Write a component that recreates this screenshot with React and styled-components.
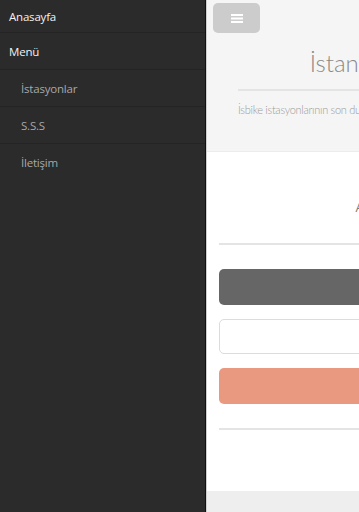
import React from 'react'
import styled, { createGlobalStyle } from 'styled-components'

const Global = createGlobalStyle`
  html, body { margin:0; padding:0; }
  body {
    width:359px;
    height:512px;
    overflow:hidden;
    font-family:"Open Sans", "Liberation Sans", sans-serif;
    background:#2b2b2b;
  }
`
const Page = styled.div`
  display:flex;
  height:512px;
  width:359px;
  overflow:hidden;
`
const Sidebar = styled.nav`
  width:205px;
  flex-shrink:0;
  background:#2b2b2b;
  border-right:1px solid #111;
  display:flex;
  flex-direction:column;
`
const Item = styled.div`
  height:${p => (p.first ? '32px' : '36px')};
  display:flex;
  align-items:center;
  padding-left:${p => (p.sub ? '21px' : '9px')};
  border-bottom:${p => (p.last ? 'none' : '1px solid #242424')};
  color:${p => (p.sub ? '#a8a8a8' : '#f2f2f2')};
  font-size:11.5px;
  letter-spacing:-0.2px;
`
const Main = styled.main`
  width:359px;
  flex-shrink:0;
  border-left:1px solid #cfcfcf;
  display:flex;
  flex-direction:column;
  background:#fff;
`
const Header = styled.header`
  background:#f5f5f5;
  height:152px;
  padding:3px 0 0 6px;
  box-sizing:border-box;
  border-bottom:1px solid #ececec;
`
const MenuButton = styled.button`
  width:47px;
  height:30px;
  border:none;
  border-radius:5px;
  background:#cccccc;
  display:flex;
  align-items:center;
  justify-content:center;
  padding:0;
`
const Intro = styled.div`
  padding:0 0 0 25px;
`
const Title = styled.h1`
  margin:16px 0 0;
  text-align:center;
  padding-right:24px;
  font-family:Lato, "Open Sans", sans-serif;
  font-weight:300;
  font-size:24px;
  color:#8a8a8a;
  white-space:nowrap;
  line-height:28px;
`
const Rule = styled.hr`
  border:none;
  border-top:${p => (p.thick ? '2px' : '1px')} solid #e4e4e4;
  margin:${p => p.m || '0'};
`
const Subtitle = styled.p`
  margin:12px 0 0;
  font-family:Lato, "Open Sans", sans-serif;
  font-size:11px;
  font-weight:300;
  color:#9a9a9a;
  white-space:nowrap;
  letter-spacing:-0.3px;
`
const Body = styled.section`
  flex:1;
  padding:0 0 0 12px;
  display:flex;
  flex-direction:column;
`
const Note = styled.p`
  margin:46px 0 0;
  text-align:center;
  font-size:13px;
  color:#777;
  padding-left:78px;
  white-space:nowrap;
  line-height:18px;
`
const Button = styled.div`
  height:36px;
  border-radius:5px;
  background:${p => p.bg};
  margin-top:${p => p.mt};
`
const Input = styled.input`
  height:35px;
  box-sizing:border-box;
  border:1px solid #dcdcdc;
  border-radius:5px;
  background:#fff;
  margin-top:14px;
  outline:none;
`
const Footer = styled.footer`
  height:21px;
  background:#eeeeee;
`

const Bars = () => (
  <svg width="12" height="9" viewBox="0 0 12 9">
    <rect x="0" y="0" width="12" height="2" fill="#fff" />
    <rect x="0" y="3.5" width="12" height="2" fill="#fff" />
    <rect x="0" y="7" width="12" height="2" fill="#fff" />
  </svg>
)

export default function App() {
  return (
    <Page>
      <Global />
      <Sidebar>
        <Item first>Anasayfa</Item>
        <Item>Menü</Item>
        <Item sub>İstasyonlar</Item>
        <Item sub>S.S.S</Item>
        <Item sub last>İletişim</Item>
      </Sidebar>
      <Main>
        <Header>
          <MenuButton><Bars /></MenuButton>
          <Intro>
            <Title>İstanbul Bisiklet</Title>
            <Rule thick m="12px 0 0" />
            <Subtitle>İsbike istasyonlarının son durumları</Subtitle>
          </Intro>
        </Header>
        <Body>
          <Note>Aşağıdan istasyon seçiniz</Note>
          <Rule thick m="27px 0 0" />
          <Button bg="#666666" mt="24px" />
          <Input />
          <Button bg="#e9997f" mt="14px" />
          <Rule thick m="24px 0 0" />
        </Body>
        <Footer />
      </Main>
    </Page>
  )
}
